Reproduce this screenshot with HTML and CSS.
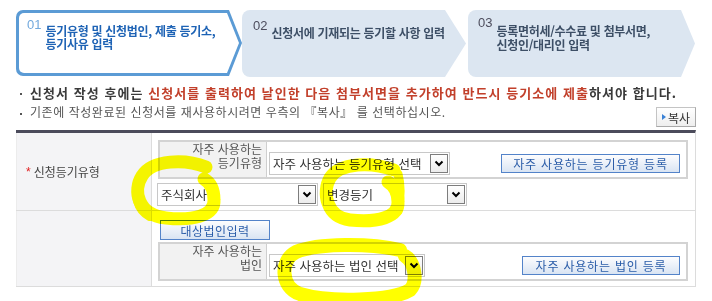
FILE: index.html
```html
<!DOCTYPE html>
<html lang="ko">
<head>
<meta charset="utf-8">
<title>등기신청</title>
<link rel="stylesheet" href="styles.css">
</head>
<body>
<div class="page">
  <div class="steps">
    <div class="step step-1">
      <div class="step-inner">
        <span class="step-num num-1">01</span>
        <span class="step-text text-1">등기유형 및 신청법인, 제출 등기소,<br>등기사유 입력</span>
      </div>
    </div>
    <div class="step step-2">
      <span class="step-num num-2">02</span>
      <span class="step-text text-2">신청서에 기재되는 등기할 사항 입력</span>
    </div>
    <div class="step step-3">
      <span class="step-num num-3">03</span>
      <span class="step-text text-3">등록면허세/수수료 및 첨부서면,<br>신청인/대리인 입력</span>
    </div>
  </div>

  <div class="notice">
    <p class="notice-line notice-strong"><span class="bullet"></span>신청서 작성 후에는 <em class="red">신청서를 출력하여 날인한 다음 첨부서면을 추가하여 반드시 등기소에 제출</em>하셔야 합니다.</p>
    <div class="notice-row">
      <p class="notice-line notice-plain"><span class="bullet"></span>기존에 작성완료된 신청서를 재사용하시려면 우측의 『복사』 를 선택하십시오.</p>
      <button class="copy-btn"><svg class="copy-icon" width="4" height="6" viewBox="0 0 4 6"><path d="M0 0L4 3L0 6Z" fill="#3b82d6"/></svg>복사</button>
    </div>
  </div>

  <div class="form">
    <div class="row row-1">
      <div class="th"><span class="req">*</span>신청등기유형</div>
      <div class="td">
        <div class="subtable">
          <div class="sub-label">자주 사용하는<br>등기유형</div>
          <div class="sub-value">
            <div class="select sel-fav1">
              <span class="sel-text">자주 사용하는 등기유형 선택</span>
              <span class="sel-arrow"><svg width="10" height="7" viewBox="0 0 10 7"><polyline points="1.5,1.5 5,5 8.5,1.5" fill="none" stroke="#000" stroke-width="2"/></svg></span>
            </div>
            <button class="reg-btn reg-1">자주 사용하는 등기유형 등록</button>
          </div>
        </div>
        <div class="sel-row">
          <div class="select sel-corp">
            <span class="sel-text">주식회사</span>
            <span class="sel-arrow"><svg width="10" height="7" viewBox="0 0 10 7"><polyline points="1.5,1.5 5,5 8.5,1.5" fill="none" stroke="#000" stroke-width="2"/></svg></span>
          </div>
          <div class="select sel-kind">
            <span class="sel-text">변경등기</span>
            <span class="sel-arrow"><svg width="10" height="7" viewBox="0 0 10 7"><polyline points="1.5,1.5 5,5 8.5,1.5" fill="none" stroke="#000" stroke-width="2"/></svg></span>
          </div>
        </div>
      </div>
    </div>
    <div class="row row-2">
      <div class="th"></div>
      <div class="td">
        <button class="input-btn">대상법인입력</button>
        <div class="subtable">
          <div class="sub-label">자주 사용하는<br>법인</div>
          <div class="sub-value">
            <div class="select sel-fav2">
              <span class="sel-text">자주 사용하는 법인 선택</span>
              <span class="sel-arrow"><svg width="10" height="7" viewBox="0 0 10 7"><polyline points="1.5,1.5 5,5 8.5,1.5" fill="none" stroke="#000" stroke-width="2"/></svg></span>
            </div>
            <button class="reg-btn reg-2">자주 사용하는 법인 등록</button>
          </div>
        </div>
      </div>
    </div>
  </div>

  <svg class="marks" width="712" height="301" viewBox="0 0 712 301">
    <path d="M206 167 C186 159 152 159 142 176 C133 190 137 215 166 218 C192 221 215 216 214 200 C214 190 211 183 204 179" fill="none" stroke="#ffff00" stroke-width="13" stroke-linecap="round"/>
    <path d="M139 180 C135 195 137 209 150 216" fill="none" stroke="#ffff00" stroke-width="10" stroke-linecap="round"/>
    <path d="M394 170 C372 162 340 162 330 178 C322 192 326 217 350 220 C378 223 399 217 398 202 C398 192 395 186 388 182" fill="none" stroke="#ffff00" stroke-width="13" stroke-linecap="round"/>
    <path d="M398 174 C401 185 401 196 398 211" fill="none" stroke="#ffff00" stroke-width="9" stroke-linecap="round"/>
    <path d="M400 250 C370 243 318 243 296 252 C280 260 280 287 300 294 C330 303 392 301 410 290 C418 282 415 262 405 256" fill="none" stroke="#ffff00" stroke-width="14" stroke-linecap="round"/>
  </svg>
</div>
</body>
</html>
```

FILE: styles.css
```css
* {
  box-sizing: border-box;
  margin: 0;
  padding: 0;
}

body {
  margin: 0;
  width: 712px;
  height: 301px;
  overflow: hidden;
  background: #fff;
  font-family: "Noto Sans CJK KR", "Noto Sans", sans-serif;
  color: #444;
}

.page {
  position: relative;
  width: 712px;
  height: 301px;
}

/* ---------- steps ---------- */
.steps {
  display: flex;
  align-items: flex-start;
  padding: 10px 0 0 16px;
  height: 77px;
}

.step {
  flex: none;
  display: flex;
  align-items: flex-start;
}

.step-1 {
  width: 226px;
  height: 66px;
  padding: 3px;
  background: #5b9bd5;
  border-radius: 7px 0 0 7px;
  clip-path: polygon(0 0, 213px 0, 226px 50%, 213px 100%, 0 100%);
}

.step-inner {
  width: 100%;
  height: 100%;
  display: flex;
  align-items: flex-start;
  padding: 5px 0 0 8px;
  background: #fff;
  border-radius: 5px 0 0 5px;
  clip-path: polygon(0 0, 208px 0, 220px 50%, 208px 100%, 0 100%);
}

.step-2 {
  width: 224px;
  height: 67px;
  margin-right: 2px;
  padding: 9px 0 0 11px;
  background: #dce6f1;
  border-radius: 8px 0 0 8px;
  clip-path: polygon(0 0, 203px 0, 224px 50%, 203px 100%, 0 100%);
}

.step-3 {
  width: 227px;
  height: 67px;
  padding: 6px 0 0 10px;
  background: #dce6f1;
  border-radius: 8px 0 0 8px;
  clip-path: polygon(0 0, 213px 0, 227px 50%, 213px 100%, 0 100%);
}

.step-num {
  font-family: "Liberation Sans", Arial, sans-serif;
  font-size: 13px;
  line-height: 13px;
  margin-right: 4px;
}

.num-1 { color: #72a9dd; }
.num-2, .num-3 { color: #4d4d5d; }

.step-text {
  font-size: 12px;
  font-weight: bold;
  line-height: 13px;
  letter-spacing: -0.3px;
}

.text-1 {
  color: #1e63b5;
  margin-top: 6px;
}

.text-2 {
  color: #3d4f66;
  margin-top: 7px;
}

.text-3 {
  color: #3d4f66;
  margin-top: 8px;
  line-height: 14px;
}

/* ---------- notice ---------- */
.notice {
  padding: 6px 16px 0 18px;
}

.notice-line {
  white-space: nowrap;
}

.notice-strong {
  font-size: 13px;
  font-weight: bold;
  line-height: 19px;
  color: #3a3a3a;
  letter-spacing: 1.05px;
}

.red {
  font-style: normal;
  color: #c2402b;
}

.notice-row {
  display: flex;
  align-items: flex-start;
  justify-content: space-between;
}

.notice-plain {
  font-size: 12px;
  line-height: 20px;
  color: #555;
  letter-spacing: 0.55px;
}

.bullet {
  display: inline-block;
  width: 2px;
  height: 2px;
  background: #555;
  margin: 0 8px 0 2px;
  vertical-align: middle;
}

.copy-btn {
  margin-top: 5px;
  width: 40px;
  height: 20px;
  display: flex;
  align-items: center;
  justify-content: center;
  gap: 2px;
  font: 12px "Noto Sans CJK KR", sans-serif;
  color: #333;
  background: linear-gradient(#ffffff, #eeeeee);
  border: 1px solid #c4c4c4;
  border-right-color: #a9a9a9;
  border-bottom-color: #a9a9a9;
}

/* ---------- form ---------- */
.form {
  margin: 3px 16px 0 16px;
  border-top: 3px solid #4b4b5b;
  border-right: 1px solid #dcdcdc;
}

.row {
  display: grid;
  grid-template-columns: 136px 1fr;
  border-bottom: 1px solid #dcdcdc;
}

.th {
  display: flex;
  align-items: center;
  padding-left: 9px;
  background: #f4f4f6;
  border-right: 1px solid #dcdcdc;
  border-left: 1px solid #ececec;
  font-size: 12px;
  color: #444;
}

.req {
  color: #e02020;
  margin-right: 3px;
  font-family: "Liberation Sans", sans-serif;
}

.td {
  padding: 7px 7px 4px 6px;
}

.row-2 .td {
  padding: 9px 7px 5px 6px;
}

.subtable {
  display: flex;
  height: 39px;
  border: 2px solid #d3d3d3;
}

.sub-label {
  width: 107px;
  flex: none;
  background: #f2f2f2;
  border-right: 1px solid #cfcfcf;
  text-align: right;
  padding-right: 4px;
  font-size: 12px;
  line-height: 14px;
  color: #555;
}

.sub-value {
  flex: 1;
  display: flex;
  align-items: center;
  padding: 8px 6px 0 2px;
}

.select {
  display: flex;
  align-items: center;
  height: 23px;
  background: #fff;
  border: 1px solid #c8c8c8;
  padding-right: 1px;
}

.sel-text {
  flex: 1;
  padding-left: 3px;
  font-size: 12.5px;
  color: #333;
  white-space: nowrap;
  overflow: hidden;
}

.sel-arrow {
  flex: none;
  width: 18px;
  height: 19px;
  display: flex;
  align-items: center;
  justify-content: center;
  border: 1px solid #7d7d7d;
  background: linear-gradient(#ffffff, #ececec);
}

.sel-fav1 { width: 181px; }
.sel-fav2 { width: 156px; }
.sel-corp { width: 161px; }
.sel-kind { width: 144px; }

.sel-row {
  display: flex;
  gap: 5px;
  margin: 4px 0 0 -1px;
}

.reg-btn {
  margin-left: auto;
  height: 19px;
  font: 12px "Noto Sans CJK KR", sans-serif;
  letter-spacing: 0.8px;
  color: #2a5ca8;
  background: linear-gradient(#fdfdfe, #d9e4f3);
  border: 1px solid #5383c9;
}

.reg-1 { width: 179px; }
.reg-2 { width: 158px; }

.input-btn {
  display: block;
  width: 110px;
  height: 20px;
  margin: 0 0 2px 2px;
  font: 12px "Noto Sans CJK KR", sans-serif;
  letter-spacing: 0.5px;
  color: #2a5ca8;
  background: linear-gradient(#fdfdfe, #d9e4f3);
  border: 1px solid #5383c9;
}

/* ---------- hand-drawn highlight marks ---------- */
.marks {
  position: absolute;
  top: 0;
  left: 0;
  pointer-events: none;
  mix-blend-mode: multiply;
}
```
